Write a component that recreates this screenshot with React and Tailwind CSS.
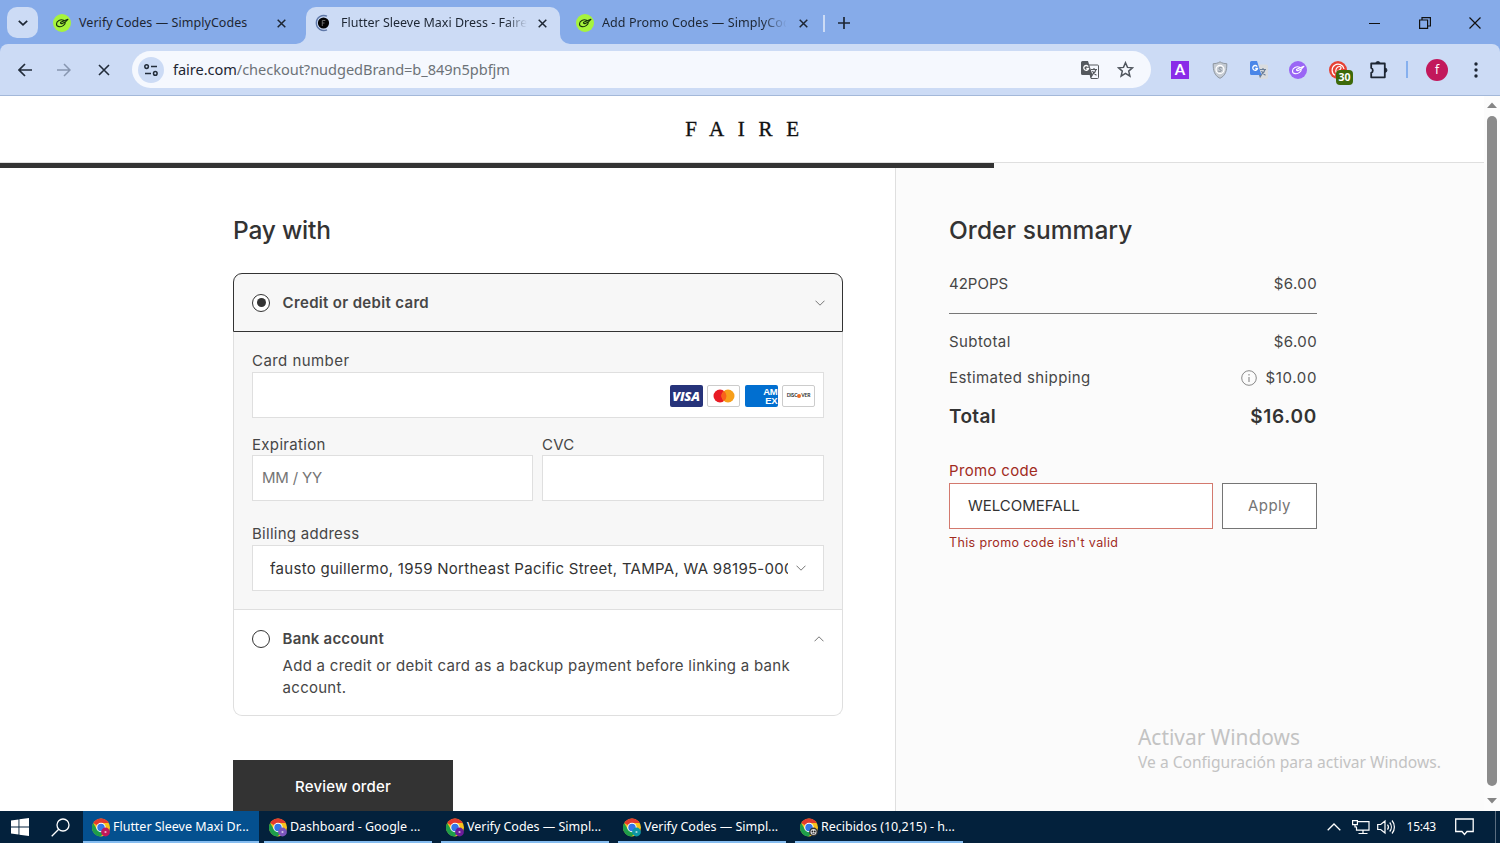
import React from "react";

const ui = "font-['Noto_Sans',sans-serif]";

function Codes({ x = "#a6f43c", ink = "#16300c", s = 18 }) {
  return (
    <svg width={s} height={s} viewBox="0 0 18 18" className="shrink-0">
      <circle cx="9" cy="9" r="9" fill={x} />
      <g fill="none" stroke={ink} strokeWidth="1.1" strokeLinecap="round" strokeLinejoin="round">
        <path d="M10.600 6.200C7.500 4.800 3.500 7 3.500 9.900c0 3 4.300 3.700 7 1.500 1.300-1.100 1.900-2.600 1.700-3.300L14.900 5.300M14.900 5.300L8.200 7.900c-1.600.8-.4 2.200 1.100 1.500l2.900-1.300" />
      </g>
    </svg>
  );
}

function Close() {
  return (
    <svg width="9" height="9" viewBox="0 0 9 9" className="shrink-0"><path d="M.7.7l7.600 7.600M8.300.7L.7 8.300" stroke="#1d2633" strokeWidth="1.500" /></svg>
  );
}

function Translate({ a, b, t, edge, s = 18 }) {
  return (
    <svg width={s} height={s} viewBox="0 0 18 18">
      <path d="M7 4h9.500a1 1 0 0 1 1 1v11.500a1 1 0 0 1-1 1H10z" fill={b} stroke={edge} strokeWidth="1" />
      <path d="M10 8.500h6M13 7v1.500M15 8.500c-.6 2.500-2.500 4.500-4 5.300M11.500 10c.8 1.800 2.500 3.500 4 4.200" stroke={t} strokeWidth="1.200" fill="none" />
      <path d="M1.500 0H7l4.500 14H1.500A1.500 1.500 0 0 1 0 12.500v-11A1.500 1.500 0 0 1 1.500 0z" fill={a} />
      <path d="M9 14h3l-2 3.200z" fill={t} />
      <path d="M7.200 5.600A2.400 2.400 0 1 0 7.500 7.500H5.300" fill="none" stroke="#fff" strokeWidth="1.300" />
    </svg>
  );
}

function Chrome({ badge, face }) {
  return (
    <svg width="20" height="20" viewBox="0 0 20 20" className="shrink-0">
      <circle cx="9" cy="9.500" r="9" fill="#f9c21b" />
      <path d="M9 9.500L1.200 5A9 9 0 0 1 16.800 5H9z" fill="#e33b2e" />
      <path d="M1.200 5A9 9 0 0 0 9 18.500l3.900-6.700L9 9.500 5.100 11.800z" fill="#1e9e4a" />
      <circle cx="9" cy="9.500" r="4.700" fill="#fff" />
      <circle cx="9" cy="9.500" r="3.700" fill="#3476e8" />
      <circle cx="13.500" cy="14" r="4.400" fill={badge} />
      {face ? (
        <g><circle cx="13.500" cy="14" r="3" fill="#ddd" /><circle cx="12.400" cy="13.500" r=".9" fill="#222" /><circle cx="14.800" cy="13.500" r=".9" fill="#222" /><path d="M12 15.700h3" stroke="#222" strokeWidth=".7" /></g>
      ) : (
        <circle cx="13.500" cy="14" r="1.100" fill="#fff" opacity=".65" />
      )}
    </svg>
  );
}

function Chevron({ up }) {
  return (
    <svg width="10" height="6" viewBox="0 0 10 6" className="shrink-0">
      <path d={up ? "M.5 5.300L5 .8l4.500 4.500" : "M.5.7L5 5.200 9.500.7"} fill="none" stroke="#777" strokeWidth="1" />
    </svg>
  );
}

function Task({ label, badge, active, face }) {
  return (
    <div className={`h-8 flex items-center pt-[3px] border-b-2 border-[#86bdf0] shrink-0 ${active ? "w-[176px] pl-[9px] bg-[#04508f]" : "w-[168px] pl-[5px]"}`}>
      <Chrome badge={badge} face={face} />
      <span className="ml-[1px] text-[12.500px] whitespace-nowrap text-white tracking-[-0.020px]">{label}</span>
    </div>
  );
}

function TabBar() {
  return (
    <div className="h-[44px] bg-[#86abe9] flex items-start shrink-0 text-[#1d2633] text-[12.500px]">
      <div className="ml-[7px] mt-[7px] w-[31px] h-[31px] rounded-[10px] bg-[#ccdbf5] flex items-center justify-center">
        <svg width="10" height="6" viewBox="0 0 10 6"><path d="M.8.8L5 4.800 9.200.8" fill="none" stroke="#1d2633" strokeWidth="1.700" /></svg>
      </div>
      <div className="w-[268px] h-[46px] flex items-center pl-[15px]">
        <Codes />
        <span className="ml-[8px] w-[198px] whitespace-nowrap tracking-[0.050px] pt-px">Verify Codes — SimplyCodes</span>
        <Close />
      </div>
      <div className="relative w-[254px] h-[37px] mt-[7px] bg-[#ccdbf5] rounded-t-[10px] flex items-center pl-[9px] pb-[5px]">
        <svg className="absolute -left-[10px] bottom-0" width="10" height="10"><path d="M10 0v10H0A10 10 0 0 0 10 0z" fill="#ccdbf5" /></svg>
        <svg className="absolute -right-[10px] bottom-0" width="10" height="10"><path d="M0 0v10h10A10 10 0 0 1 0 0z" fill="#ccdbf5" /></svg>
        <svg width="16" height="18" viewBox="0 0 16 18" className="shrink-0"><path d="M12 2.200A7.500 7.500 0 1 0 12 15.800" fill="none" stroke="#5f78a8" strokeWidth="1.400" /><circle cx="8.500" cy="9" r="5.600" fill="#050505" /><path d="M7.300 12V6.500h3M7.300 9H9.500" stroke="#777" strokeWidth=".9" fill="none" /></svg>
        <span className="ml-[10px] w-[186px] overflow-hidden whitespace-nowrap mr-[11px] pt-px [mask-image:linear-gradient(to_right,black_165px,transparent_186px)]">Flutter Sleeve Maxi Dress - Faire</span>
        <Close />
      </div>
      <div className="w-[265px] h-[46px] flex items-center pl-[16px]">
        <Codes />
        <span className="ml-[8px] w-[185px] overflow-hidden whitespace-nowrap mr-[13px] pt-px tracking-[0.080px] [mask-image:linear-gradient(to_right,black_160px,transparent_185px)]">Add Promo Codes — SimplyCodes</span>
        <Close />
        <span className="ml-[15px] w-[2px] h-[17px] bg-[#ccdbf5]" />
      </div>
      <svg className="mt-[17px] ml-[13px]" width="12" height="12"><path d="M6 0v12M0 6h12" stroke="#1d2633" strokeWidth="1.700" /></svg>
      <div className="ml-auto flex items-center h-[46px] pr-[19px] gap-[38px]">
        <svg width="12" height="12"><path d="M0 6.500h11" stroke="#111" /></svg>
        <svg width="12" height="12" fill="none" stroke="#111" strokeWidth="1.200"><path d="M.6 3h8v8.400h-8zM3 3V.6h8.400V9H9" /></svg>
        <svg width="12" height="12"><path d="M.5.5l11 11m0-11l-11 11" stroke="#111" strokeWidth="1.200" /></svg>
      </div>
    </div>
  );
}

function Toolbar() {
  return (
    <div className="bg-[#86abe9] shrink-0">
      <div className="h-[52px] bg-[#ccdbf5] border-b border-[#a3b8d9] rounded-t-[8px] flex items-center">
        <svg className="ml-[18px]" width="14" height="14" fill="none" stroke="#222c3a" strokeWidth="1.700"><path d="M14 7H1.200M7 1L1 7l6 6" /></svg>
        <svg className="ml-[25px]" width="14" height="14" fill="none" stroke="#8796b0" strokeWidth="1.500"><path d="M0 7h12.800M7 1l6 6-6 6" /></svg>
        <svg className="ml-[27px]" width="12" height="12" fill="none" stroke="#222c3a" strokeWidth="1.600"><path d="M1 1l10 10m0-10L1 11" /></svg>
        <div className="ml-[22px] w-[1019px] h-[37px] rounded-full bg-[#f5f8fe] flex items-center pl-[6px] text-[14.600px]">
          <div className="w-[26px] h-[26px] rounded-full bg-[#ccdbf5] flex items-center justify-center">
            <svg width="14" height="12" fill="none" stroke="#222c3a" strokeWidth="1.500"><circle cx="2.600" cy="2.600" r="1.800" /><path d="M7 2.600h6M1 9.400h6" /><circle cx="11.300" cy="9.400" r="1.800" /></svg>
          </div>
          <span className="ml-[9px] text-[#1d2633] tracking-[-0.060px]">faire.com<span className="text-[#6d7378]">/checkout?nudgedBrand=b_849n5pbfjm</span></span>
          <div className="ml-auto mr-[17px] flex items-center gap-[18px]">
            <Translate a="#55595e" b="#f5f8fe" t="#55595e" edge="#55595e" />
            <svg width="17" height="17" viewBox="0 0 17 17"><path d="M8.500 1.700l2 4.700 5 .4-3.800 3.300 1.200 5-4.400-2.700-4.400 2.700 1.200-5L1.500 6.800l5-.4z" fill="none" stroke="#50565e" strokeWidth="1.500" /></svg>
          </div>
        </div>
        <div className="flex items-center ml-[20px]">
          <div className="w-[18px] h-[18px] bg-[#8a2be8] text-white flex items-center justify-center text-[15px] leading-none font-bold font-[Lato,sans-serif]">A</div>
          <svg className="ml-[23px]" width="16" height="18" viewBox="0 0 16 18"><path d="M8 .8c2 1.400 4.300 1.800 6.800 1.900.1 6.500-1 11.800-6.800 14.600C2.200 14.500 1.100 9.200 1.200 2.700 3.700 2.600 6 2.200 8 .8z" fill="#c5cbd3" stroke="#8e969f" /><circle cx="8" cy="8.500" r="4" fill="none" stroke="#fff" strokeWidth="1.300" /><path d="M9.800 6.800c-2-1.300-4 .5-2 1.600 2.500.8 1.500 2.800-1.600 1.800" fill="none" stroke="#858d96" /></svg>
          <div className="ml-[22px]"><Translate a="#4a86e8" b="#d9dcdf" t="#6b7f98" edge="#d9dcdf" /></div>
          <div className="ml-[21px]"><Codes x="#9a66f5" ink="#fff" /></div>
          <div className="relative ml-[22px] w-[18px] h-[18px]">
            <svg width="18" height="18"><circle cx="9" cy="9" r="9" fill="#e64235" /><path d="M6 14.300A6 6 0 1 1 15 8M7.500 12c-2-3 .5-6.700 3.300-6.500 2.300.3 1.300 3.800-2.300 4.500" stroke="#fff" strokeWidth="1.200" fill="none" /></svg>
            <span className="absolute left-[7px] top-[9px] w-[17px] h-[15px] rounded-[4px] bg-[#3d6909] text-white font-bold text-[10.500px] leading-[15px] text-center">30</span>
          </div>
          <svg className="ml-[23px]" width="18" height="18" viewBox="0 0 18 18"><path d="M1.200 2.500h13.600v13.800H1.200v-4.500a2.600 2.600 0 0 0 0-4.800z" fill="none" stroke="#1d2633" strokeWidth="1.800" strokeLinejoin="round" /><path d="M5.800 2.500a2.100 2.100 0 0 1 4.200 0zM14.800 7a2.100 2.100 0 0 1 0 4.400z" fill="#1d2633" stroke="#1d2633" strokeWidth=".8" /></svg>
          <span className="ml-[18px] w-[2px] h-[17px] bg-[#86b0ee]" />
          <span className="ml-[18px] w-[22px] h-[22px] rounded-full bg-[#c2185b] text-white text-[12px] leading-[21px] text-center">f</span>
          <svg className="ml-[26px]" width="4" height="16" fill="#1d2633"><circle cx="2" cy="2" r="1.700" /><circle cx="2" cy="8" r="1.700" /><circle cx="2" cy="14" r="1.700" /></svg>
        </div>
      </div>
    </div>
  );
}

function Cards() {
  return (
    <div className="ml-auto flex gap-[4.500px] mr-[8px] mt-[2px]">
      <div className="w-[33px] h-[22px] rounded-[2px] bg-[#26337a] text-white italic font-extrabold text-[13px] leading-[22px] text-center tracking-[-0.200px] font-['Open_Sans',sans-serif]">VISA</div>
      <div className="w-[33px] h-[22px] rounded-[2px] border border-[#ccc] flex items-center justify-center">
        <svg width="22" height="14"><circle cx="7" cy="7" r="6.500" fill="#e81b24" /><circle cx="15" cy="7" r="6.500" fill="#f79f1a" /><path d="M11 1.900a6.500 6.500 0 0 1 0 10.200 6.500 6.500 0 0 1 0-10.200" fill="#f9611b" /></svg>
      </div>
      <div className="w-[33px] h-[22px] rounded-[2px] bg-[#016fd0] flex flex-col items-end pt-[2px] text-white font-bold text-[9.500px] leading-[9px] tracking-[-0.200px] font-['Liberation_Sans',sans-serif]"><span>AM</span><span>EX</span></div>
      <div className="w-[33px] h-[22px] rounded-[2px] border border-[#ccc] flex items-center justify-center text-[5px] tracking-[-0.200px] font-bold text-[#333] font-[Lato,sans-serif]">DISC<i className="w-[4px] h-[4px] rounded-full bg-[#ed6b23]" />VER</div>
    </div>
  );
}

function Payment() {
  return (
    <div className="w-[895px] pl-[233px] pt-[49px] shrink-0">
      <h1 className="text-[24.500px] leading-[36px] font-medium text-[#333] tracking-[-0.200px]">Pay with</h1>
      <div className="mt-[25px] w-[610px] h-[59px] border border-[#333] rounded-t-[9px] bg-[#f7f7f7] flex items-center pl-[18px] pr-[17px]">
        <span className="w-[18px] h-[18px] rounded-full border border-[#333] bg-white flex items-center justify-center"><i className="w-[9px] h-[9px] rounded-full bg-[#333]" /></span>
        <span className="ml-[12.600px] mr-auto mt-px font-semibold tracking-[0.330px]">Credit or debit card</span>
        <Chevron />
      </div>
      <div className="w-[610px] h-[278px] border-x border-b border-[#dfdfdf] bg-[#f7f7f7] px-[18px] pt-[18px]">
        <div className="h-[22px] leading-[22px] tracking-[0.440px]">Card number</div>
        <div className="h-[46px] border border-[#dfdfdf] bg-white flex items-center"><Cards /></div>
        <div className="flex gap-[9px] mt-[15px]">
          <div className="w-[281px]"><div className="h-[22px] leading-[23px] tracking-[0.330px]">Expiration</div><div className="h-[46px] border border-[#dfdfdf] bg-white flex items-center pl-[9px] pt-px text-[#757575] tracking-[-0.200px]">MM / YY</div></div>
          <div className="w-[282px]"><div className="h-[22px] leading-[23px]">CVC</div><div className="h-[46px] border border-[#dfdfdf] bg-white" /></div>
        </div>
        <div className="mt-[21px] h-[23px] leading-[23px]">Billing address</div>
        <div className="h-[46px] border border-[#dfdfdf] bg-white flex items-center pl-[17px] pr-[17px]">
          <span className="w-[518px] overflow-hidden whitespace-nowrap mr-auto pt-[2px] text-[#333] tracking-[0.280px]">fausto guillermo, 1959 Northeast Pacific Street, TAMPA, WA 98195-0001</span>
          <Chevron />
        </div>
      </div>
      <div className="w-[610px] h-[106px] border-x border-b border-[#dfdfdf] rounded-b-[9px] px-[18px] pt-[18px]">
        <div className="flex items-center h-[22px]">
          <span className="w-[18px] h-[18px] rounded-full border border-[#333]" />
          <span className="ml-[12.600px] mr-auto font-semibold tracking-[0.200px]">Bank account</span>
          <Chevron up />
        </div>
        <div className="ml-[30.600px] mt-[5px] leading-[22px]"><div>Add a credit or debit card as a backup payment before linking a bank</div><div>account.</div></div>
      </div>
      <div className="mt-[44px] w-[220px] h-[54px] bg-[#333] text-white text-center leading-[53px] font-medium tracking-[0.160px]">Review order</div>
    </div>
  );
}

function Summary() {
  return (
    <div className="w-[589px] border-l border-[#dfdfdf] bg-[#fbfbfb] pl-[53px] shrink-0 pt-[49px] relative">
      <div className="w-[368px]">
        <h2 className="text-[24.500px] leading-[36px] font-medium text-[#333] tracking-[0.060px]">Order summary</h2>
        <div className="flex justify-between mt-[24px] h-[42px] leading-[24px] border-b border-[#777]"><span className="tracking-[0px]">42POPS</span><span className="tracking-[0.400px]">$6.00</span></div>
        <div className="flex justify-between mt-[16px] leading-[24px] tracking-[0.400px]"><span>Subtotal</span><span>$6.00</span></div>
        <div className="flex items-center mt-[12px] leading-[24px] tracking-[0.400px]"><span className="mr-auto">Estimated shipping</span>
          <svg width="16" height="16" fill="none" stroke="#888"><circle cx="8" cy="8" r="7.300" /><path d="M8 7v5M8 4v1.400" strokeWidth="1.100" /></svg>
          <span className="ml-[8px] tracking-[0.650px]">$10.00</span></div>
        <div className="flex justify-between mt-[12px] leading-[30px] text-[19px] font-semibold text-[#333]"><span className="tracking-[0.350px]">Total</span><span className="tracking-[0.700px]">$16.00</span></div>
        <div className="mt-[27px] h-[24px] leading-[24px] text-[#a12b1e] tracking-[0.330px]">Promo code</div>
        <div className="flex gap-[9px]">
          <div className="w-[264px] h-[46px] border border-[#d3796e] bg-white leading-[44px] pl-[18px] text-[#333] tracking-[0px]">WELCOMEFALL</div>
          <div className="w-[95px] h-[46px] border border-[#757575] bg-white leading-[44px] text-center text-[#757575] tracking-[0.400px]">Apply</div>
        </div>
        <div className="mt-[4px] text-[12.500px] leading-[20px] text-[#a12b1e] tracking-[0.370px]">This promo code isn't valid</div>
      </div>
      <div className={`absolute left-[242px] top-[561px] text-[#c3c3c3] whitespace-nowrap tracking-[0px] ${ui}`}>
        <div className="text-[20.900px] leading-[26px]">Activar Windows</div>
        <div className="text-[15.600px] leading-[25px]">Ve a Configuración para activar Windows.</div>
      </div>
    </div>
  );
}

export default function App() {
  return (
    <div className={`w-[1500px] h-[843px] overflow-hidden flex flex-col bg-white ${ui}`}>
      <TabBar />
      <Toolbar />
      <div className="flex h-[715px] overflow-hidden shrink-0">
        <div className="w-[1484px] font-[Inter,sans-serif] text-[15px] tracking-[0.270px] text-[#464646]">
          <div className="h-[67px] border-b border-[#dfdfdf] flex items-center justify-center pt-[2px] pl-[14px] text-[21px] text-[#111] tracking-[13.700px] font-['Liberation_Serif',serif] [-webkit-text-stroke:0.350px_#111]">FAIRE</div>
          <div className="h-[4px] relative z-10"><div className="w-[994px] h-[5px] bg-[#333]" /></div>
          <div className="flex h-[652px] -mt-[4px]"><Payment /><Summary /></div>
        </div>
        <div className="w-4 bg-[#fcfcfc] flex flex-col items-center pt-[6px]">
          <svg width="10" height="6"><path d="M0 6l5-5.500L10 6z" fill="#858585" /></svg>
          <div className="mt-[8px] w-[10px] h-[670px] rounded-full bg-[#8b8b8b]" />
          <svg className="mt-[12px]" width="10" height="6"><path d="M0 0l5 5.500L10 0z" fill="#858585" /></svg>
        </div>
      </div>
      <div className="h-8 bg-[#03213c] flex items-center shrink-0">
        <svg className="ml-[11px]" width="18" height="18" fill="#fff"><path d="M0 2.500L7.500 1.400v7.100H0zM8.400 1.300L18 0v8.500H8.400zM0 9.400h7.500v7.100L0 15.500zM8.400 9.400H18V18l-9.600-1.300z" /></svg>
        <svg className="ml-[22px] mr-[13px]" width="19" height="19" fill="none" stroke="#fff" strokeWidth="1.300"><circle cx="12" cy="7" r="6" /><path d="M7.700 11.300L.7 18.300" /></svg>
        <Task label="Flutter Sleeve Maxi Dr..." badge="#c2185b" active />
        <div className="ml-[5px] flex gap-[9px]">
          <Task label="Dashboard - Google ..." badge="#7b55bd" />
          <Task label="Verify Codes — Simpl..." badge="#6c1b9a" />
          <Task label="Verify Codes — Simpl..." badge="#0d96a5" />
          <Task label="Recibidos (10,215) - h..." badge="#333" face />
        </div>
        <div className="ml-auto flex items-center text-white text-[12px]">
          <svg width="14" height="8" fill="none" stroke="#fff" strokeWidth="1.300"><path d="M.7 7.300L7 1l6.300 6.300" /></svg>
          <svg className="ml-[11px]" width="18" height="16" fill="none" stroke="#fff" strokeWidth="1.200"><path d="M6 2.600h11v8.500H4.500V8M11 11v3.500M6.500 14.500h9M.6 1.600h4.800v4H.6zM3 5.600V8h2" /></svg>
          <svg className="ml-[7px]" width="19" height="16" fill="none" stroke="#fff" strokeWidth="1.200"><path d="M.7 5.500h3L8 2v12l-4.300-3.500h-3zM10.500 5.500a4 4 0 0 1 0 5M12.700 3.500a7 7 0 0 1 0 9M15 1.500a10 10 0 0 1 0 13" /></svg>
          <span className="ml-[11px] tracking-[-0.250px]">15:43</span>
          <svg className="ml-[19px]" width="19" height="18" fill="none" stroke="#fff" strokeWidth="1.300"><path d="M.7 1h17.500v12.500H12l-2.500 3-2.500-3H.7z" /></svg>
          <span className="ml-[21px] mr-[4px] w-px h-8 bg-[#5a6d80]" />
        </div>
      </div>
    </div>
  );
}
